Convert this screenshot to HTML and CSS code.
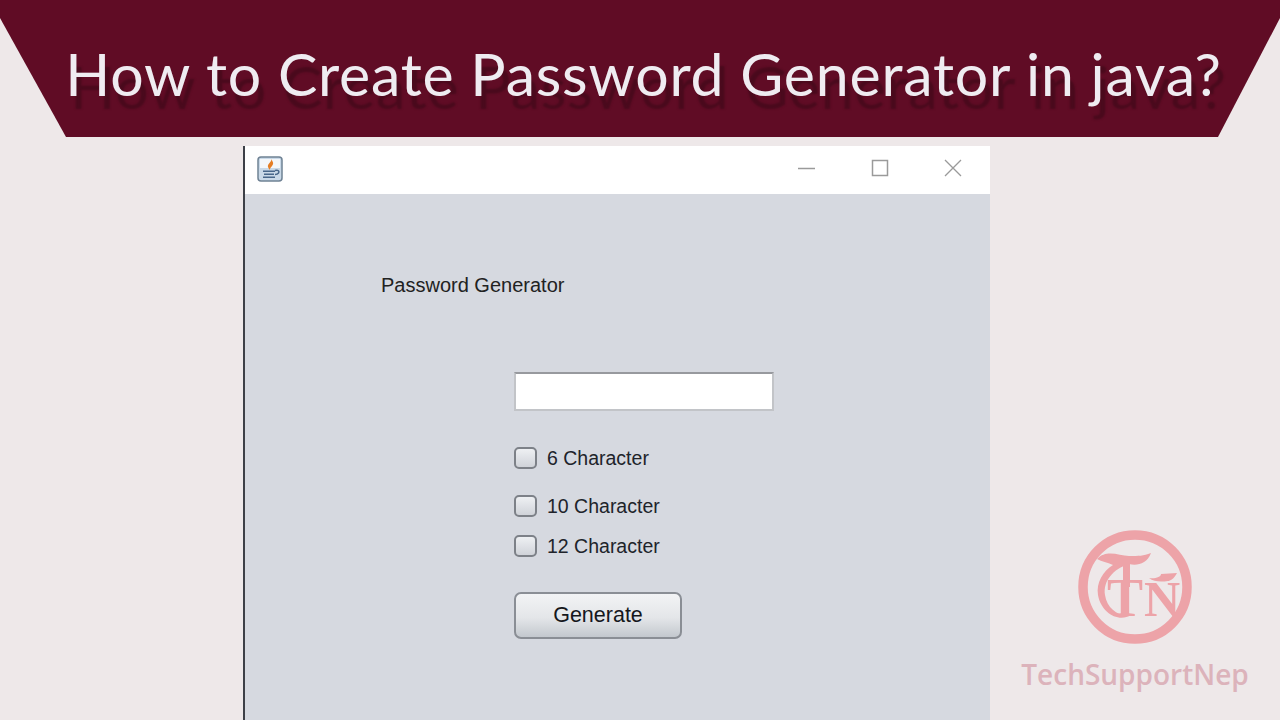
FILE: index.html
```html
<!DOCTYPE html>
<html lang="en">
<head>
    <meta charset="UTF-8">
    <title>How to Create Password Generator in java?</title>
    <link rel="stylesheet" href="styles.css">
</head>
<body>
    <header class="banner">
        <h1>How to Create Password Generator in java?</h1>
    </header>

    <main class="stage">
        <section class="window">
            <div class="titlebar">
                <svg class="app-icon" width="26" height="26" viewBox="0 0 26 26">
                    <rect x="1" y="1" width="24" height="24" rx="3" fill="#c9d9e8" stroke="#6f8294" stroke-width="1.500"/>
                    <rect x="3" y="3" width="20" height="9" fill="#f4f7fa"/>
                    <path d="M14 3c1.500 2.500-4 5-3 8 .3 1 1 2 2 3-.6-2.500 4-4.500 3-7.500-.4-1.200-1-2.500-2-3.500z" fill="#e57e25"/>
                    <path d="M6 14.500h12V16H6zM7 17.500h10V19H7zM6 20.500h12V22H6z" fill="#48678a"/>
                    <path d="M18 14.500c3.500-1 4.500 1 3.500 2.500-.7 1-2 1.500-3.500 1.500" fill="none" stroke="#48678a" stroke-width="1.500"/>
                </svg>
                <div class="win-controls">
                    <svg width="18" height="18" viewBox="0 0 18 18"><path d="M0 9.500h17" stroke="#9a9a9a" stroke-width="1.500"/></svg>
                    <svg width="18" height="18" viewBox="0 0 18 18"><rect x="1.500" y="1.500" width="15" height="15" fill="none" stroke="#9a9a9a" stroke-width="1.500"/></svg>
                    <svg width="18" height="18" viewBox="0 0 18 18"><path d="M1 1l16 16M17 1L1 17" stroke="#9a9a9a" stroke-width="1.300"/></svg>
                </div>
            </div>
            <div class="window-body">
                <p class="form-title">Password Generator</p>
                <div class="form">
                    <div class="text-field"></div>
                    <label class="check first"><span class="box"></span>6 Character</label>
                    <label class="check second"><span class="box"></span>10 Character</label>
                    <label class="check third"><span class="box"></span>12 Character</label>
                    <div class="generate">Generate</div>
                </div>
            </div>
        </section>

        <aside class="brand">
            <svg class="brand-logo" width="116" height="116" viewBox="0 0 116 116">
                <circle cx="58" cy="58" r="52" fill="none" stroke="#eda3a8" stroke-width="9.500"/>
                <!-- swashes of the monogram: top bar with bowl, stem, flag over the N -->
                <path class="logo-swash" d="M20 30C30 20 42 27 52 27S66 27 74 24C70 35 60 37 52 35 36 40 26 52 28 66 30 80 42 88 54 86 42 94 24 84 21 66 19 54 26 42 36 36 30 33 25 33 20 30z"/>
                <path class="logo-swash" d="M46 34h7v24h-7zM72 49c6 1 12-1 12-4l16-1c-3 6-7 8-9 8-7 1-14 1-19-3z"/>
                <text class="logo-mark" x="30" y="87">T<tspan class="logo-n" dx="1">N</tspan></text>
            </svg>
            <div class="brand-name">TechSupportNep</div>
        </aside>
    </main>
</body>
</html>
```

FILE: styles.css
```css
* {
    margin: 0;
    padding: 0;
    box-sizing: border-box;
}
html, body {
    height: 720px;
    overflow: hidden;
}
body {
    font-family: "Liberation Sans", Arial, sans-serif;
    background: #eee8e9;
    color: #1a1a1a;
}
.banner {
    height: 137px;
    background: #600c25;
    clip-path: polygon(0 18px, 0 0, 100% 0, 100% 18px, 1218px 137px, 66px 137px);
    display: flex;
    justify-content: center;
    padding: 37px 0 0 7px;
}
.banner h1 {
    font-family: Lato, "Open Sans", sans-serif;
    font-size: 59px;
    font-weight: 400;
    line-height: 74px;
    letter-spacing: 0.8px;
    white-space: nowrap;
    color: #efecf1;
    text-shadow: 5px 13px 2px #4a0a1d;
}
.stage {
    display: flex;
    align-items: flex-start;
    padding: 9px 0 0 243px;
}
.window {
    width: 747px;
    height: 574px;
    flex: none;
    border-left: 2px solid #3d4047;
    background: #d6d9e0;
}
.titlebar {
    height: 48px;
    background: #fff;
    display: flex;
    align-items: center;
    justify-content: space-between;
    padding: 0 28px 4px 12px;
}
.app-icon {
    margin-top: 2px;
}
.win-controls {
    display: flex;
    gap: 55px;
}
.window-body {
    padding: 80px 0 0 136px;
}
.form-title {
    font-size: 20px;
    line-height: 22px;
    color: #222;
}
.form {
    margin: 76px 0 0 133px;
    display: flex;
    flex-direction: column;
    align-items: flex-start;
}
.text-field {
    width: 260px;
    height: 39px;
    background: #fff;
    border: 2px solid #c2c4c8;
    border-top-color: #97999e;
}
.check {
    display: flex;
    align-items: center;
    gap: 10px;
    height: 22px;
    font-size: 19.500px;
    color: #20232a;
}
.first {
    margin-top: 36px;
}
.second {
    margin-top: 26px;
}
.third {
    margin-top: 18px;
}
.box {
    width: 23px;
    height: 22px;
    border: 2px solid #7d8188;
    border-radius: 5px;
    background: linear-gradient(#eef0f3, #d0d3d9);
}
.generate {
    margin-top: 35px;
    width: 168px;
    height: 47px;
    border: 2px solid #8a8e95;
    border-radius: 7px;
    background: linear-gradient(#f2f3f5, #e4e6e9 55%, #c3c8ce);
    font-size: 21.500px;
    line-height: 43px;
    text-align: center;
    color: #15171c;
}
.brand {
    width: 260px;
    margin: 383px 0 0 15px;
    display: flex;
    flex-direction: column;
    align-items: center;
}
.logo-swash {
    fill: #eda3a8;
}
.logo-mark {
    font-family: "Liberation Serif", serif;
    font-size: 54px;
    font-weight: 700;
    fill: #eda3a8;
}
.logo-n {
    font-size: 50px;
}
.brand-name {
    margin-top: 11px;
    font-family: "Open Sans", sans-serif;
    font-size: 28px;
    font-weight: 600;
    line-height: 36px;
    color: #dcb3bb;
}
```
